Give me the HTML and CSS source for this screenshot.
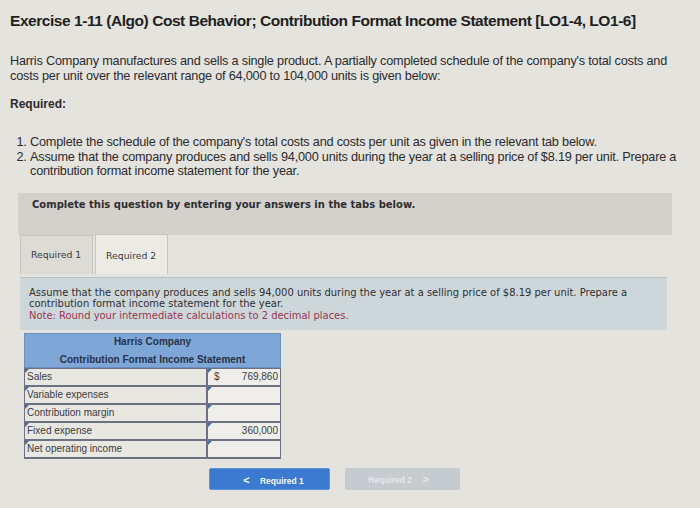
FILE: index.html
```html
<!DOCTYPE html>
<html>
<head>
<meta charset="utf-8">
<link rel="stylesheet" href="styles.css">
</head>
<body>
<h1 class="title">Exercise 1-11 (Algo) Cost Behavior; Contribution Format Income Statement [LO1-4, LO1-6]</h1>
<p class="intro">Harris Company manufactures and sells a single product. A partially completed schedule of the company's total costs and costs per unit over the relevant range of 64,000 to 104,000 units is given below:</p>
<p class="req">Required:</p>
<ol class="list">
<li>Complete the schedule of the company's total costs and costs per unit as given in the relevant tab below.</li>
<li>Assume that the company produces and sells 94,000 units during the year at a selling price of $8.19 per unit. Prepare a contribution format income statement for the year.</li>
</ol>
<div class="notice">Complete this question by entering your answers in the tabs below.</div>
<div class="tabs">
<div class="tab">Required 1</div>
<div class="tab active">Required 2</div>
</div>
<div class="panel">
<p>Assume that the company produces and sells 94,000 units during the year at a selling price of $8.19 per unit. Prepare a contribution format income statement for the year.</p>
<p class="note">Note: Round your intermediate calculations to 2 decimal places.</p>
</div>
<div class="stmt">
<div class="head">
<div class="h1">Harris Company</div>
<div class="h2">Contribution Format Income Statement</div>
</div>
<div class="row"><div class="lab">Sales</div><div class="val"><span class="cur">$</span><span>769,860</span></div></div>
<div class="row"><div class="lab">Variable expenses</div><div class="val"></div></div>
<div class="row"><div class="lab">Contribution margin</div><div class="val"></div></div>
<div class="row"><div class="lab">Fixed expense</div><div class="val"><span></span><span>360,000</span></div></div>
<div class="row"><div class="lab">Net operating income</div><div class="val"></div></div>
</div>
<div class="nav">
<div class="btn prev"><span class="chev">&lt;</span> Required 1</div>
<div class="btn next">Required 2 <span class="chev">&gt;</span></div>
</div>
</body>
</html>
```
FILE: styles.css
```css
html, body {
  margin: 0;
  padding: 0;
}
body {
  background: #e5e3de;
  color: #2b2b2d;
  font-family: "Liberation Sans", Arial, sans-serif;
  width: 700px;
  height: 508px;
  overflow: hidden;
  padding-left: 10px;
  box-sizing: border-box;
}
.title {
  margin: 0;
  padding-top: 11px;
  font-size: 15.5px;
  line-height: 20px;
  font-weight: bold;
  letter-spacing: -0.45px;
  color: #1f1f22;
  white-space: nowrap;
}
.intro {
  margin: 23px 0 0 0;
  font-size: 12.7px;
  line-height: 15px;
  letter-spacing: -0.2px;
  width: 672px;
}
.req {
  margin: 13px 0 0 0;
  font-size: 12px;
  font-weight: bold;
  line-height: 14px;
}
.list {
  margin: 24px 0 0 0;
  padding-left: 20px;
  font-size: 12.7px;
  line-height: 14.5px;
  letter-spacing: -0.2px;
  width: 660px;
}
.notice {
  margin: 14px 0 0 8px;
  width: 654px;
  height: 42px;
  box-sizing: border-box;
  background: #d4d1cc;
  padding: 5px 14px;
  font-family: "DejaVu Sans", Verdana, sans-serif;
  font-weight: bold;
  font-size: 10px;
  line-height: 14px;
  color: #2e2e30;
}
.tabs {
  display: flex;
  align-items: flex-end;
  gap: 2px;
  margin: -1px 0 0 10px;
  height: 40px;
}
.tab {
  width: 73px;
  height: 39px;
  box-sizing: border-box;
  border: 1px solid #c7c4be;
  border-bottom: none;
  background: #dddbd5;
  font-family: "DejaVu Sans", Verdana, sans-serif;
  font-size: 9.3px;
  line-height: 11px;
  color: #3a3a3c;
  padding: 13px 0 0 10px;
}
.tab.active {
  height: 40px;
  background: #eceae5;
  padding-top: 15px;
}
.panel {
  margin: 3px 0 0 10px;
  width: 647px;
  height: 53px;
  box-sizing: border-box;
  background: #cdd7da;
  border-top: 1px solid #b9c3c7;
  padding: 9px 9px;
  font-family: "DejaVu Sans", Verdana, sans-serif;
  font-size: 9.95px;
  line-height: 11px;
  color: #2e2e30;
}
.panel p {
  margin: 0;
}
.note {
  color: #9a3350;
  margin-top: 1px !important;
}
.stmt {
  margin: 3px 0 0 14px;
  width: 257px;
  font-size: 10px;
}
.head {
  background: #7ea7d8;
  border: 1px solid #6a8fbf;
  text-align: center;
  font-weight: bold;
  color: #25324a;
  height: 35px;
  box-sizing: border-box;
}
.h1 {
  padding-top: 1px;
  line-height: 13px;
}
.h2 {
  line-height: 13px;
  padding-top: 5px;
}
.row {
  display: flex;
  gap: 2px;
  height: 18px;
  background: #6c7282;
  padding-top: 1px;
  box-sizing: border-box;
}
.row:last-child {
  padding-bottom: 1px;
  height: 19px;
}
.lab, .val {
  position: relative;
  background: #e8e7e2;
  height: 16px;
  line-height: 16px;
  color: #3b3b40;
  box-sizing: border-box;
}
.lab {
  width: 182px;
  padding-left: 2px;
  border-left: 1px solid #6c7282;
}
.val {
  flex: 1;
  background: #efeeea;
  display: flex;
  justify-content: space-between;
  padding: 0 2px 0 6px;
  border-right: 1px solid #6c7282;
}
.lab::before, .val::before {
  content: "";
  position: absolute;
  left: 0;
  top: 0;
  border-top: 4px solid #4f6a94;
  border-right: 4px solid transparent;
}
.nav {
  display: flex;
  gap: 15px;
  margin: 9px 0 0 199px;
}
.btn {
  height: 22px;
  line-height: 22px;
  box-sizing: border-box;
  font-size: 8.5px;
  font-weight: bold;
  text-align: center;
}
.prev {
  width: 121px;
  background: #3b7ad0;
  color: #f4f7fc;
  border: 1px solid #5b92da;
  border-radius: 2px;
}
.next {
  width: 115px;
  background: #c6cbcf;
  color: #e4e7ea;
  border-radius: 2px;
}
.chev {
  font-size: 11px;
  margin: 0 8px;
  font-weight: bold;
}
```
